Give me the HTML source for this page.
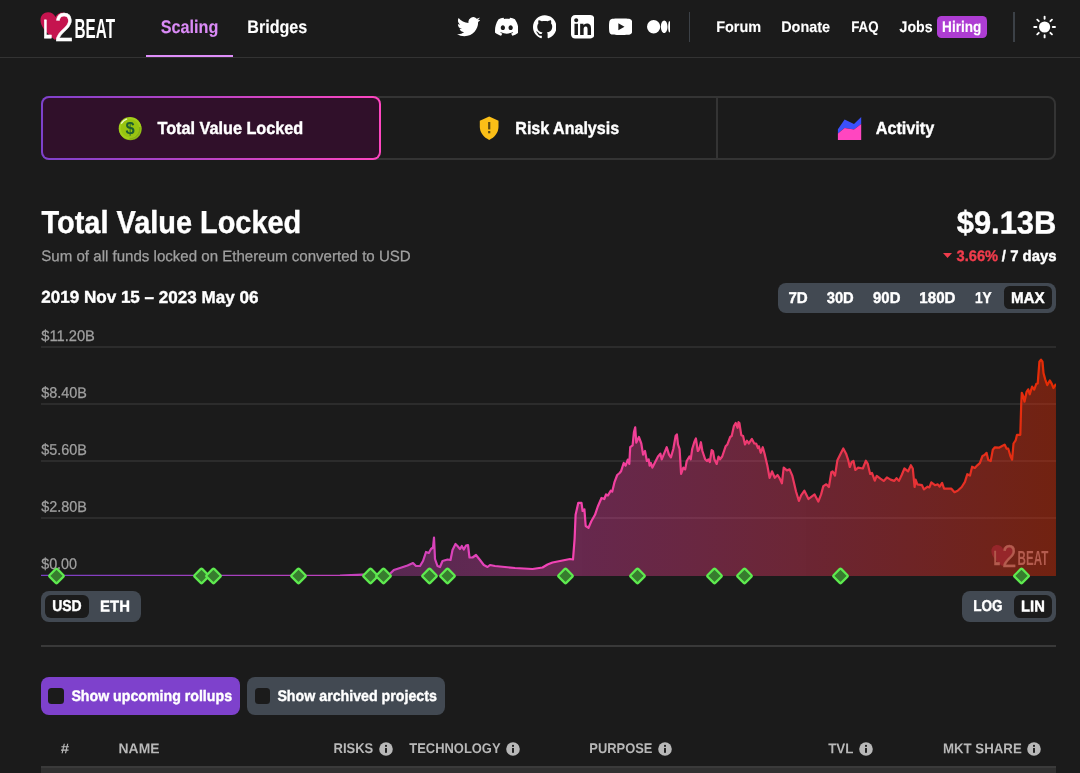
<!DOCTYPE html>
<html lang="en">
<head>
<meta charset="utf-8">
<title>L2BEAT – The state of the layer two ecosystem</title>
<style>
html,body{margin:0;padding:0;background:#1b1b1b;}
body{width:1080px;height:773px;overflow:hidden;position:relative;font-family:"Liberation Sans",Arial,sans-serif;color:#fff;}
.abs{position:absolute;}
.t{position:absolute;white-space:nowrap;line-height:1;transform-origin:0 0;}
.b{font-weight:bold;-webkit-text-stroke:0.4px currentColor;}
.g{color:#a0a0a0;-webkit-text-stroke:0.25px currentColor;}
.m{font-weight:bold;-webkit-text-stroke:0.12px currentColor;}
.th{font-weight:bold;color:#b8b8b8;}
</style>
</head>
<body>
<div id="root" style="position:absolute;left:0;top:0;width:1080px;height:773px;will-change:transform">
<!-- header -->
<div class="abs" style="left:0;top:57px;width:1080px;height:1px;background:#333333"></div>
<div class="abs" style="left:145.7px;top:54.7px;width:87.4px;height:2.5px;background:#de8ef9"></div>
<svg class="abs" style="left:30px;top:5px" width="100" height="50" viewBox="30 5 100 50" font-family="Liberation Sans, Arial, sans-serif"><path d="M55 40C45 32 40.5 26 40.5 20C40.5 15.3 44 12.3 48 12.3C51.5 12.3 54 14 55.5 17C57 14 59.5 12.5 62.5 12.5C66.5 12.5 69.5 15.5 69.5 20C69.5 26 64 32 55 40Z" fill="#c5144f"/>
<text x="43.6" y="37.9" font-size="26.5" font-weight="bold" fill="#fff" stroke="#fff" stroke-width="0.9" stroke-linejoin="round" textLength="8.2" lengthAdjust="spacingAndGlyphs">L</text>
<text x="54.4" y="41.2" font-size="41.5" fill="#fff" stroke="#fff" stroke-width="0.35" stroke-linejoin="round" textLength="19" lengthAdjust="spacingAndGlyphs">2</text>
<text x="74.6" y="38.3" font-size="27" font-weight="bold" fill="#fff" textLength="40.4" lengthAdjust="spacingAndGlyphs">BEAT</text></svg>
<span class="t m" id="nav1" style="left:0;top:0;font-size:18.17px;color:#db8bf7;transform:translate(160.74px,17.88px) rotate(0.03deg) scaleX(0.8911)">Scaling</span>
<span class="t m" id="nav2" style="left:0;top:0;font-size:18.17px;transform:translate(247.29px,17.90px) rotate(0.03deg) scaleX(0.8877)">Bridges</span>
<svg class="abs" style="left:456.6px;top:15.2px" width="23.5" height="23.5" viewBox="0 0 24 24"><path fill="#fff" d="M23.953 4.57a10 10 0 01-2.825.775 4.958 4.958 0 002.163-2.723c-.951.555-2.005.959-3.127 1.184a4.92 4.92 0 00-8.384 4.482C7.69 8.095 4.067 6.13 1.64 3.162a4.822 4.822 0 00-.666 2.475c0 1.71.87 3.213 2.188 4.096a4.904 4.904 0 01-2.228-.616v.06a4.923 4.923 0 003.946 4.827 4.996 4.996 0 01-2.212.085 4.936 4.936 0 004.604 3.417 9.867 9.867 0 01-6.102 2.105c-.39 0-.779-.023-1.17-.067a13.995 13.995 0 007.557 2.209c9.053 0 13.998-7.496 13.998-13.985 0-.21 0-.42-.015-.63A9.935 9.935 0 0024 4.59z"/></svg>
<svg class="abs" style="left:494.6px;top:15.2px" width="23.5" height="23.5" viewBox="0 0 24 24"><path fill="#fff" d="M20.317 4.3698a19.7913 19.7913 0 00-4.8851-1.5152.0741.0741 0 00-.0785.0371c-.211.3753-.4447.8648-.6083 1.2495-1.8447-.2762-3.68-.2762-5.4868 0-.1636-.3933-.4058-.8742-.6177-1.2495a.077.077 0 00-.0785-.037 19.7363 19.7363 0 00-4.8852 1.515.0699.0699 0 00-.0321.0277C.5334 9.0458-.319 13.5799.0992 18.0578a.0824.0824 0 00.0312.0561c2.0528 1.5076 4.0413 2.4228 5.9929 3.0294a.0777.0777 0 00.0842-.0276c.4616-.6304.8731-1.2952 1.226-1.9942a.076.076 0 00-.0416-.1057c-.6528-.2476-1.2743-.5495-1.8722-.8923a.077.077 0 01-.0076-.1277c.1258-.0943.2517-.1923.3718-.2914a.0743.0743 0 01.0776-.0105c3.9278 1.7933 8.18 1.7933 12.0614 0a.0739.0739 0 01.0785.0095c.1202.099.246.1981.3728.2924a.077.077 0 01-.0066.1276 12.2986 12.2986 0 01-1.873.8914.0766.0766 0 00-.0407.1067c.3604.698.7719 1.3628 1.225 1.9932a.076.076 0 00.0842.0286c1.961-.6067 3.9495-1.5219 6.0023-3.0294a.077.077 0 00.0313-.0552c.5004-5.177-.8382-9.6739-3.5485-13.6604a.061.061 0 00-.0312-.0286zM8.02 15.3312c-1.1825 0-2.1569-1.0857-2.1569-2.419 0-1.3332.9555-2.4189 2.157-2.4189 1.2108 0 2.1757 1.0952 2.1568 2.419 0 1.3332-.9555 2.4189-2.1569 2.4189zm7.9748 0c-1.1825 0-2.1569-1.0857-2.1569-2.419 0-1.3332.9554-2.4189 2.1569-2.4189 1.2108 0 2.1757 1.0952 2.1568 2.419 0 1.3332-.946 2.4189-2.1568 2.4189Z"/></svg>
<svg class="abs" style="left:532.6px;top:15.2px" width="23.5" height="23.5" viewBox="0 0 24 24"><path fill="#fff" d="M12 .297c-6.63 0-12 5.373-12 12 0 5.303 3.438 9.8 8.205 11.385.6.113.82-.258.82-.577 0-.285-.01-1.04-.015-2.04-3.338.724-4.042-1.61-4.042-1.61C4.422 18.07 3.633 17.7 3.633 17.7c-1.087-.744.084-.729.084-.729 1.205.084 1.838 1.236 1.838 1.236 1.07 1.835 2.809 1.305 3.495.998.108-.776.417-1.305.76-1.605-2.665-.3-5.466-1.332-5.466-5.93 0-1.31.465-2.38 1.235-3.22-.135-.303-.54-1.523.105-3.176 0 0 1.005-.322 3.3 1.23.96-.267 1.98-.399 3-.405 1.02.006 2.04.138 3 .405 2.28-1.552 3.285-1.23 3.285-1.23.645 1.653.24 2.873.12 3.176.765.84 1.23 1.91 1.23 3.22 0 4.61-2.805 5.625-5.475 5.92.42.36.81 1.096.81 2.22 0 1.606-.015 2.896-.015 3.286 0 .315.21.69.825.57C20.565 22.092 24 17.592 24 12.297c0-6.627-5.373-12-12-12"/></svg>
<svg class="abs" style="left:570.6px;top:15.2px" width="23.5" height="23.5" viewBox="0 0 24 24"><path fill="#fff" d="M20.447 20.452h-3.554v-5.569c0-1.328-.027-3.037-1.852-3.037-1.853 0-2.136 1.445-2.136 2.939v5.667H9.351V9h3.414v1.561h.046c.477-.9 1.637-1.85 3.37-1.85 3.601 0 4.267 2.37 4.267 5.455v6.286zM5.337 7.433c-1.144 0-2.063-.926-2.063-2.065 0-1.138.92-2.063 2.063-2.063 1.14 0 2.064.925 2.064 2.063 0 1.139-.925 2.065-2.064 2.065zm1.782 13.019H3.555V9h3.564v11.452zM19.800 0H4.200C1.880 0 0 1.880 0 4.200v15.600C0 22.120 1.880 24 4.200 24h15.600c2.320 0 4.200-1.880 4.200-4.200V4.200C24 1.880 22.120 0 19.800 0z"/></svg>
<svg class="abs" style="left:608.6px;top:15.2px" width="23.5" height="23.5" viewBox="0 0 24 24"><path fill="#fff" d="M23.498 6.186a3.016 3.016 0 0 0-2.122-2.136C19.505 3.545 12 3.545 12 3.545s-7.505 0-9.377.505A3.017 3.017 0 0 0 .502 6.186C0 8.07 0 12 0 12s0 3.930.502 5.814a3.016 3.016 0 0 0 2.122 2.136c1.871.505 9.376.505 9.376.505s7.505 0 9.377-.505a3.015 3.015 0 0 0 2.122-2.136C24 15.930 24 12 24 12s0-3.930-.502-5.814zM9.545 15.568V8.432L15.818 12l-6.273 3.568z"/></svg>
<svg class="abs" style="left:646.6px;top:15.2px" width="23.5" height="23.5" viewBox="0 0 24 24"><path fill="#fff" d="M13.54 12a6.8 6.8 0 01-6.77 6.82A6.8 6.8 0 010 12a6.8 6.8 0 016.77-6.82A6.8 6.8 0 0113.54 12zM20.960 12c0 3.540-1.510 6.420-3.380 6.420-1.870 0-3.390-2.880-3.390-6.420s1.520-6.420 3.390-6.420 3.380 2.880 3.380 6.420M24 12c0 3.170-.53 5.750-1.190 5.750-.66 0-1.190-2.580-1.190-5.750s.53-5.750 1.190-5.750C23.470 6.250 24 8.830 24 12z"/></svg>

<div class="abs" style="left:688.8px;top:12px;width:1.4px;height:30px;background:#3c4147"></div>
<span class="t m" id="l1" style="left:0;top:0;font-size:15.41px;transform:translate(716.19px,18.96px) rotate(0.03deg) scaleX(0.9389)">Forum</span>
<span class="t m" id="l2" style="left:0;top:0;font-size:15.41px;transform:translate(781.15px,18.96px) rotate(0.03deg) scaleX(0.9370)">Donate</span>
<span class="t m" id="l3" style="left:0;top:0;font-size:15.41px;transform:translate(851.17px,18.96px) rotate(0.03deg) scaleX(0.8637)">FAQ</span>
<span class="t m" id="l4" style="left:0;top:0;font-size:15.41px;transform:translate(899.60px,18.96px) rotate(0.03deg) scaleX(0.9177)">Jobs</span>
<div class="abs" style="left:936.5px;top:15.6px;width:50.4px;height:22.8px;border-radius:4.5px;background:#ae3dd3"></div>
<span class="t m" id="l5" style="left:0;top:0;font-size:15.41px;transform:translate(942.13px,18.96px) rotate(0.03deg) scaleX(0.8814)">Hiring</span>
<div class="abs" style="left:1013.2px;top:12px;width:1.4px;height:30px;background:#3c4147"></div>
<svg class="abs" style="left:1032px;top:15px" width="24" height="24" viewBox="-12 -12 24 24"><circle r="5.6" cx="0.6" cy="0" fill="#fff"/><g transform="translate(0.6 0)" stroke="#fff" stroke-width="1.9" stroke-linecap="round"><path d="M0 -8.2V-10.4M0 8.200V10.4M-8.200 0H-10.400M8.200 0H10.400M5.800 5.800L7.350 7.350M-5.800 5.800L-7.350 7.350M5.800 -5.800L7.350 -7.350M-5.800 -5.800L-7.350 -7.350"/></g></svg>


<!-- tabs -->
<div class="abs" style="left:41px;top:96px;width:1011px;height:60px;border:2px solid #343434;border-radius:8px"></div>
<div class="abs" style="left:716px;top:98px;width:2px;height:60px;background:#343434"></div>
<div class="abs" style="left:41px;top:96px;width:340px;height:64px;border-radius:8px;background:linear-gradient(90deg,#7E41CC,#FF46C0)"></div>
<div class="abs" style="left:43px;top:98px;width:336px;height:60px;border-radius:6px;background:#30102a"></div>
<svg class="abs" style="left:118px;top:116px" width="24" height="25" viewBox="118 116 24 25"><circle cx="130.400" cy="129" r="11.300" fill="#7fa814"/><circle cx="130" cy="128.300" r="11.300" fill="#a3cf1a"/><circle cx="130" cy="128.300" r="9.200" fill="#97c511"/><path d="M121.600 123.200A9.600 9.600 0 0 1 126.600 119.200" fill="none" stroke="#eef7c8" stroke-width="1.300" stroke-linecap="round"/><path d="M139.800 127A10.300 10.300 0 0 1 129.500 138.800" fill="none" stroke="#86b016" stroke-width="1.600"/><text x="130" y="134.300" text-anchor="middle" font-family="Liberation Sans, Arial, sans-serif" font-weight="bold" font-size="16.500" fill="#1d5e30">$</text></svg>
<svg class="abs" style="left:478px;top:115px" width="22" height="27" viewBox="478 115 22 27"><path d="M489.200 116.600L498.500 120.700V126.800C498.500 132.500 494.600 137.600 489.200 139.900C483.800 137.600 479.800 132.500 479.800 126.800V120.700Z" fill="#fbbf17"/><rect x="488.100" y="122" width="2.200" height="7.400" fill="#5d4a12"/><rect x="488.100" y="131" width="2.200" height="2.300" fill="#5d4a12"/></svg>
<svg class="abs" style="left:836px;top:115px" width="27" height="27" viewBox="836 115 27 27"><path d="M837.900 129.200L844.600 119.400L854 124L861.200 116.900V124L854 129.600L844.600 127.900L837.900 133.400Z" fill="#3b50fb"/><path d="M837.900 133.400L844.600 127.900L854 129.600L861.200 124V139.900H837.900Z" fill="#ff46c0"/></svg>

<span class="t b" id="tab1" style="left:0;top:0;font-size:17.44px;transform:translate(157.51px,119.55px) rotate(0.03deg) scaleX(0.9304)">Total Value Locked</span>
<span class="t b" id="tab2" style="left:0;top:0;font-size:17.44px;transform:translate(515.30px,119.55px) rotate(0.03deg) scaleX(0.9206)">Risk Analysis</span>
<span class="t b" id="tab3" style="left:0;top:0;font-size:17.44px;transform:translate(875.69px,119.67px) rotate(0.03deg) scaleX(0.9302)">Activity</span>

<!-- heading -->
<span class="t b" id="h1" style="left:0;top:0;font-size:31.83px;transform:translate(41.57px,207.19px) rotate(0.03deg) scaleX(0.9081)">Total Value Locked</span>
<span class="t g" id="sub" style="left:0;top:0;font-size:15.26px;transform:translate(41.33px,248.12px) rotate(0.03deg) scaleX(0.9881)">Sum of all funds locked on Ethereum converted to USD</span>
<span class="t b" id="tvl" style="left:0;top:0;font-size:31.83px;transform:translate(956.70px,207.37px) rotate(0.03deg) scaleX(0.9711)">$9.13B</span>
<svg class="abs" style="left:943px;top:253px" width="9" height="6" viewBox="0 0 9 6"><path d="M0 0H9L4.5 5Z" fill="#f03c4c"/></svg>
<span class="t b" id="pct" style="left:0;top:0;font-size:15.26px;color:#f03c4c;transform:translate(956.55px,248.11px) rotate(0.03deg) scaleX(0.9601)">3.66%</span>
<span class="t b" id="days" style="left:0;top:0;font-size:15.26px;transform:translate(1001.87px,248.08px) rotate(0.03deg) scaleX(0.9761)">/ 7 days</span>
<span class="t b" id="range" style="left:0;top:0;font-size:17.15px;transform:translate(41.19px,288.82px) rotate(0.03deg) scaleX(0.9957)">2019 Nov 15 – 2023 May 06</span>

<!-- range control -->
<div class="abs" style="left:778px;top:283px;width:278px;height:30px;border-radius:8px;background:#424952"></div>
<div class="abs" style="left:1003.8px;top:286.4px;width:48.7px;height:22.6px;border-radius:5.5px;background:#1b1b1b"></div>
<span class="t b" id="r1" style="left:0;top:0;font-size:15.7px;transform:translate(788.46px,289.90px) rotate(0.03deg) scaleX(0.9641)">7D</span>
<span class="t b" id="r2" style="left:0;top:0;font-size:15.7px;transform:translate(826.69px,289.97px) rotate(0.03deg) scaleX(0.9398)">30D</span>
<span class="t b" id="r3" style="left:0;top:0;font-size:15.7px;transform:translate(873.07px,289.88px) rotate(0.03deg) scaleX(0.9500)">90D</span>
<span class="t b" id="r4" style="left:0;top:0;font-size:15.7px;transform:translate(919.37px,289.97px) rotate(0.03deg) scaleX(0.9634)">180D</span>
<span class="t b" id="r5" style="left:0;top:0;font-size:15.7px;transform:translate(974.90px,289.82px) rotate(0.03deg) scaleX(0.8691)">1Y</span>
<span class="t b" id="r6" style="left:0;top:0;font-size:15.7px;transform:translate(1010.92px,289.91px) rotate(0.03deg) scaleX(0.9692)">MAX</span>

<!-- chart -->
<svg class="abs" style="left:0;top:0" width="1080" height="773" viewBox="0 0 1080 773">
<defs>
<linearGradient id="lg" gradientUnits="userSpaceOnUse" x1="41" y1="0" x2="1056" y2="0"><stop offset="0" stop-color="#7E41CC"/><stop offset="0.5" stop-color="#FF46C0"/><stop offset="1" stop-color="#EE2C01"/></linearGradient>
<linearGradient id="fg" gradientUnits="userSpaceOnUse" x1="41" y1="0" x2="1056" y2="0"><stop offset="0" stop-color="#7E41CC" stop-opacity="0.32"/><stop offset="0.5" stop-color="#FF46C0" stop-opacity="0.33"/><stop offset="1" stop-color="#EE2C01" stop-opacity="0.41"/></linearGradient>
</defs>
<rect x="41" y="346" width="1015" height="2" fill="#2c2c2c"/><rect x="41" y="403" width="1015" height="2" fill="#2c2c2c"/><rect x="41" y="460" width="1015" height="2" fill="#2c2c2c"/><rect x="41" y="517" width="1015" height="2" fill="#2c2c2c"/>
<clipPath id="cc"><rect x="41" y="340" width="1015" height="236.1"/></clipPath>
<g clip-path="url(#cc)"><path d="M41.0 575.8 L150.0 575.8 L250.0 575.8 L340.0 575.6 L362.5 574.7 L390.0 573.8 L393.8 570.0 L400.0 568.0 L407.5 565.5 L413.0 563.0 L416.0 566.0 L420.0 566.0 L423.0 561.0 L426.0 552.0 L428.8 553.0 L431.0 549.0 L433.0 547.5 L434.0 537.5 L435.0 559.0 L437.5 566.0 L440.0 567.0 L442.5 561.0 L447.5 559.5 L450.5 560.0 L452.5 550.0 L455.5 544.0 L457.5 546.0 L460.0 549.0 L461.8 546.0 L463.8 549.5 L466.0 545.5 L468.0 545.0 L469.5 557.5 L472.5 557.5 L476.0 555.0 L480.0 560.0 L483.8 565.0 L487.5 567.0 L490.0 565.0 L495.0 566.0 L505.0 567.0 L515.0 568.0 L532.5 569.0 L542.5 567.5 L547.5 564.5 L552.5 562.5 L560.0 561.0 L570.0 559.0 L573.0 559.5 L574.6 538.9 L575.6 514.8 L578.3 502.8 L581.5 502.8 L582.6 511.0 L584.4 509.3 L585.7 526.0 L588.5 527.8 L591.3 521.3 L595.0 514.8 L597.8 506.5 L601.5 498.0 L604.3 499.0 L606.0 494.4 L608.0 495.4 L610.7 490.7 L612.2 491.7 L614.4 482.4 L617.2 475.0 L619.6 473.0 L621.0 471.3 L623.7 463.0 L625.6 465.7 L627.8 459.6 L629.3 463.9 L630.2 447.2 L632.6 445.4 L633.9 432.4 L635.2 427.4 L636.3 442.6 L638.9 437.0 L641.3 443.5 L643.1 454.6 L645.0 451.0 L646.9 461.0 L648.7 459.3 L649.6 465.7 L650.9 463.0 L652.4 467.6 L655.2 462.0 L658.0 456.5 L660.4 453.7 L661.7 459.3 L664.4 452.8 L666.7 447.2 L669.0 454.6 L670.9 457.4 L673.3 449.0 L675.6 436.0 L676.9 434.3 L678.0 444.4 L679.6 449.0 L681.1 474.0 L683.3 467.6 L685.2 469.4 L686.7 461.0 L689.4 456.5 L690.7 459.3 L692.2 449.0 L694.4 441.7 L695.9 438.5 L697.8 451.0 L699.3 449.0 L700.9 442.2 L702.4 451.0 L705.2 459.3 L707.0 461.0 L708.5 459.3 L709.8 462.0 L711.7 450.0 L713.0 451.0 L714.4 459.3 L716.7 463.9 L718.5 456.5 L720.0 459.3 L722.2 456.5 L725.6 446.3 L727.4 444.4 L730.2 437.0 L731.7 436.0 L733.9 426.0 L735.7 423.0 L737.6 427.8 L738.5 422.2 L739.4 423.0 L741.3 435.2 L743.1 436.0 L745.0 444.4 L746.9 440.7 L748.7 443.5 L751.9 438.9 L754.3 443.5 L756.1 443.5 L758.0 448.0 L758.9 446.3 L760.7 452.8 L762.8 447.2 L764.6 453.7 L767.4 465.7 L769.6 477.8 L772.0 471.3 L774.8 477.8 L777.6 475.0 L779.4 477.8 L781.9 483.3 L783.7 467.6 L786.9 470.4 L789.6 469.4 L792.4 475.9 L796.1 491.7 L798.9 500.9 L801.1 495.4 L804.4 490.7 L808.5 499.0 L811.9 496.3 L814.6 494.4 L818.3 501.5 L821.1 494.4 L823.3 486.1 L826.3 484.3 L828.9 487.0 L831.3 472.2 L832.6 471.3 L835.0 475.6 L837.4 460.2 L840.6 453.7 L843.3 448.5 L846.1 453.7 L848.0 459.3 L849.8 467.0 L851.7 462.0 L853.5 461.0 L855.4 470.0 L858.1 467.6 L862.8 468.5 L865.9 460.7 L867.8 463.9 L870.2 474.0 L872.0 473.0 L874.8 480.6 L876.7 475.9 L880.4 478.7 L883.7 480.9 L886.9 477.4 L890.6 479.6 L894.3 480.9 L896.5 478.1 L898.9 480.9 L901.7 475.0 L904.4 468.5 L908.1 471.3 L910.9 465.2 L912.8 468.5 L914.6 487.0 L915.6 479.6 L917.4 484.3 L922.0 485.2 L923.9 489.4 L927.6 486.7 L929.4 487.4 L931.3 482.4 L935.0 485.2 L937.8 484.3 L939.6 486.7 L942.1 482.9 L944.1 488.7 L951.4 488.7 L954.5 492.2 L957.6 490.8 L961.7 487.0 L964.9 481.9 L967.3 474.2 L970.0 475.6 L972.1 466.7 L974.8 468.0 L977.3 465.3 L979.8 463.2 L982.5 456.0 L984.5 455.0 L986.6 452.9 L988.3 460.1 L990.7 461.1 L992.8 449.8 L994.9 447.3 L999.0 447.7 L1002.1 446.0 L1004.6 444.6 L1006.7 448.7 L1008.3 448.7 L1010.4 456.0 L1012.1 459.7 L1013.5 443.5 L1015.6 440.4 L1017.0 434.8 L1020.3 434.8 L1021.2 404.2 L1021.8 392.8 L1023.2 395.9 L1024.5 401.7 L1026.6 391.8 L1028.2 389.3 L1029.7 394.3 L1032.1 386.6 L1034.2 389.7 L1036.3 383.9 L1037.7 383.5 L1039.4 361.7 L1041.0 359.7 L1042.5 361.7 L1043.5 373.1 L1045.2 379.3 L1047.3 385.1 L1049.8 380.4 L1051.8 383.9 L1053.5 388.0 L1056.0 383.9 L1056 577 L41 577 Z" fill="url(#fg)"/>
<path d="M41.0 575.8 L150.0 575.8 L250.0 575.8 L340.0 575.6 L362.5 574.7 L390.0 573.8 L393.8 570.0 L400.0 568.0 L407.5 565.5 L413.0 563.0 L416.0 566.0 L420.0 566.0 L423.0 561.0 L426.0 552.0 L428.8 553.0 L431.0 549.0 L433.0 547.5 L434.0 537.5 L435.0 559.0 L437.5 566.0 L440.0 567.0 L442.5 561.0 L447.5 559.5 L450.5 560.0 L452.5 550.0 L455.5 544.0 L457.5 546.0 L460.0 549.0 L461.8 546.0 L463.8 549.5 L466.0 545.5 L468.0 545.0 L469.5 557.5 L472.5 557.5 L476.0 555.0 L480.0 560.0 L483.8 565.0 L487.5 567.0 L490.0 565.0 L495.0 566.0 L505.0 567.0 L515.0 568.0 L532.5 569.0 L542.5 567.5 L547.5 564.5 L552.5 562.5 L560.0 561.0 L570.0 559.0 L573.0 559.5 L574.6 538.9 L575.6 514.8 L578.3 502.8 L581.5 502.8 L582.6 511.0 L584.4 509.3 L585.7 526.0 L588.5 527.8 L591.3 521.3 L595.0 514.8 L597.8 506.5 L601.5 498.0 L604.3 499.0 L606.0 494.4 L608.0 495.4 L610.7 490.7 L612.2 491.7 L614.4 482.4 L617.2 475.0 L619.6 473.0 L621.0 471.3 L623.7 463.0 L625.6 465.7 L627.8 459.6 L629.3 463.9 L630.2 447.2 L632.6 445.4 L633.9 432.4 L635.2 427.4 L636.3 442.6 L638.9 437.0 L641.3 443.5 L643.1 454.6 L645.0 451.0 L646.9 461.0 L648.7 459.3 L649.6 465.7 L650.9 463.0 L652.4 467.6 L655.2 462.0 L658.0 456.5 L660.4 453.7 L661.7 459.3 L664.4 452.8 L666.7 447.2 L669.0 454.6 L670.9 457.4 L673.3 449.0 L675.6 436.0 L676.9 434.3 L678.0 444.4 L679.6 449.0 L681.1 474.0 L683.3 467.6 L685.2 469.4 L686.7 461.0 L689.4 456.5 L690.7 459.3 L692.2 449.0 L694.4 441.7 L695.9 438.5 L697.8 451.0 L699.3 449.0 L700.9 442.2 L702.4 451.0 L705.2 459.3 L707.0 461.0 L708.5 459.3 L709.8 462.0 L711.7 450.0 L713.0 451.0 L714.4 459.3 L716.7 463.9 L718.5 456.5 L720.0 459.3 L722.2 456.5 L725.6 446.3 L727.4 444.4 L730.2 437.0 L731.7 436.0 L733.9 426.0 L735.7 423.0 L737.6 427.8 L738.5 422.2 L739.4 423.0 L741.3 435.2 L743.1 436.0 L745.0 444.4 L746.9 440.7 L748.7 443.5 L751.9 438.9 L754.3 443.5 L756.1 443.5 L758.0 448.0 L758.9 446.3 L760.7 452.8 L762.8 447.2 L764.6 453.7 L767.4 465.7 L769.6 477.8 L772.0 471.3 L774.8 477.8 L777.6 475.0 L779.4 477.8 L781.9 483.3 L783.7 467.6 L786.9 470.4 L789.6 469.4 L792.4 475.9 L796.1 491.7 L798.9 500.9 L801.1 495.4 L804.4 490.7 L808.5 499.0 L811.9 496.3 L814.6 494.4 L818.3 501.5 L821.1 494.4 L823.3 486.1 L826.3 484.3 L828.9 487.0 L831.3 472.2 L832.6 471.3 L835.0 475.6 L837.4 460.2 L840.6 453.7 L843.3 448.5 L846.1 453.7 L848.0 459.3 L849.8 467.0 L851.7 462.0 L853.5 461.0 L855.4 470.0 L858.1 467.6 L862.8 468.5 L865.9 460.7 L867.8 463.9 L870.2 474.0 L872.0 473.0 L874.8 480.6 L876.7 475.9 L880.4 478.7 L883.7 480.9 L886.9 477.4 L890.6 479.6 L894.3 480.9 L896.5 478.1 L898.9 480.9 L901.7 475.0 L904.4 468.5 L908.1 471.3 L910.9 465.2 L912.8 468.5 L914.6 487.0 L915.6 479.6 L917.4 484.3 L922.0 485.2 L923.9 489.4 L927.6 486.7 L929.4 487.4 L931.3 482.4 L935.0 485.2 L937.8 484.3 L939.6 486.7 L942.1 482.9 L944.1 488.7 L951.4 488.7 L954.5 492.2 L957.6 490.8 L961.7 487.0 L964.9 481.9 L967.3 474.2 L970.0 475.6 L972.1 466.7 L974.8 468.0 L977.3 465.3 L979.8 463.2 L982.5 456.0 L984.5 455.0 L986.6 452.9 L988.3 460.1 L990.7 461.1 L992.8 449.8 L994.9 447.3 L999.0 447.7 L1002.1 446.0 L1004.6 444.6 L1006.7 448.7 L1008.3 448.7 L1010.4 456.0 L1012.1 459.7 L1013.5 443.5 L1015.6 440.4 L1017.0 434.8 L1020.3 434.8 L1021.2 404.2 L1021.8 392.8 L1023.2 395.9 L1024.5 401.7 L1026.6 391.8 L1028.2 389.3 L1029.7 394.3 L1032.1 386.6 L1034.2 389.7 L1036.3 383.9 L1037.7 383.5 L1039.4 361.7 L1041.0 359.7 L1042.5 361.7 L1043.5 373.1 L1045.2 379.3 L1047.3 385.1 L1049.8 380.4 L1051.8 383.9 L1053.5 388.0 L1056.0 383.9" fill="none" stroke="url(#lg)" stroke-width="2.2" stroke-opacity="0.94" stroke-linejoin="round"/></g>
<g transform="translate(960.4 535.7) scale(0.765)" font-family="Liberation Sans, Arial, sans-serif"><path d="M55 40C45 32 40.5 26 40.5 20C40.5 15.3 44 12.3 48 12.3C51.5 12.3 54 14 55.5 17C57 14 59.5 12.5 62.5 12.5C66.5 12.5 69.5 15.5 69.5 20C69.5 26 64 32 55 40Z" fill="#96262a"/>
<text x="43.6" y="37.9" font-size="26.5" font-weight="bold" fill="#b45c4f" stroke="#b45c4f" stroke-width="0.9" stroke-linejoin="round" textLength="8.2" lengthAdjust="spacingAndGlyphs">L</text>
<text x="54.4" y="41.2" font-size="41.5" fill="#b45c4f" stroke="#b45c4f" stroke-width="0.35" stroke-linejoin="round" textLength="19" lengthAdjust="spacingAndGlyphs">2</text>
<text x="74.6" y="38.3" font-size="27" font-weight="bold" fill="#b45c4f" textLength="40.4" lengthAdjust="spacingAndGlyphs">BEAT</text></g>
<rect x="51.05" y="570.4499999999999" width="10.9" height="10.9" rx="1" transform="rotate(45 56.5 575.9)" fill="#377d2e" stroke="#5eea4f" stroke-width="2.2" stroke-linejoin="round"/><rect x="196.05" y="570.4499999999999" width="10.9" height="10.9" rx="1" transform="rotate(45 201.5 575.9)" fill="#377d2e" stroke="#5eea4f" stroke-width="2.2" stroke-linejoin="round"/><rect x="208.05" y="570.4499999999999" width="10.9" height="10.9" rx="1" transform="rotate(45 213.5 575.9)" fill="#377d2e" stroke="#5eea4f" stroke-width="2.2" stroke-linejoin="round"/><rect x="293.05" y="570.4499999999999" width="10.9" height="10.9" rx="1" transform="rotate(45 298.5 575.9)" fill="#377d2e" stroke="#5eea4f" stroke-width="2.2" stroke-linejoin="round"/><rect x="365.05" y="570.4499999999999" width="10.9" height="10.9" rx="1" transform="rotate(45 370.5 575.9)" fill="#377d2e" stroke="#5eea4f" stroke-width="2.2" stroke-linejoin="round"/><rect x="378.05" y="570.4499999999999" width="10.9" height="10.9" rx="1" transform="rotate(45 383.5 575.9)" fill="#377d2e" stroke="#5eea4f" stroke-width="2.2" stroke-linejoin="round"/><rect x="424.05" y="570.4499999999999" width="10.9" height="10.9" rx="1" transform="rotate(45 429.5 575.9)" fill="#377d2e" stroke="#5eea4f" stroke-width="2.2" stroke-linejoin="round"/><rect x="442.05" y="570.4499999999999" width="10.9" height="10.9" rx="1" transform="rotate(45 447.5 575.9)" fill="#377d2e" stroke="#5eea4f" stroke-width="2.2" stroke-linejoin="round"/><rect x="560.05" y="570.4499999999999" width="10.9" height="10.9" rx="1" transform="rotate(45 565.5 575.9)" fill="#377d2e" stroke="#5eea4f" stroke-width="2.2" stroke-linejoin="round"/><rect x="632.05" y="570.4499999999999" width="10.9" height="10.9" rx="1" transform="rotate(45 637.5 575.9)" fill="#377d2e" stroke="#5eea4f" stroke-width="2.2" stroke-linejoin="round"/><rect x="709.05" y="570.4499999999999" width="10.9" height="10.9" rx="1" transform="rotate(45 714.5 575.9)" fill="#377d2e" stroke="#5eea4f" stroke-width="2.2" stroke-linejoin="round"/><rect x="739.05" y="570.4499999999999" width="10.9" height="10.9" rx="1" transform="rotate(45 744.5 575.9)" fill="#377d2e" stroke="#5eea4f" stroke-width="2.2" stroke-linejoin="round"/><rect x="835.05" y="570.4499999999999" width="10.9" height="10.9" rx="1" transform="rotate(45 840.5 575.9)" fill="#377d2e" stroke="#5eea4f" stroke-width="2.2" stroke-linejoin="round"/><rect x="1016.05" y="570.4499999999999" width="10.9" height="10.9" rx="1" transform="rotate(45 1021.5 575.9)" fill="#377d2e" stroke="#5eea4f" stroke-width="2.2" stroke-linejoin="round"/>
</svg>
<span class="t g" id="y1" style="left:0;top:0;font-size:15.41px;transform:translate(41.27px,327.92px) rotate(0.03deg) scaleX(0.9539)">$11.20B</span>
<span class="t g" id="y2" style="left:0;top:0;font-size:15.41px;transform:translate(41.20px,384.86px) rotate(0.03deg) scaleX(0.9345)">$8.40B</span>
<span class="t g" id="y3" style="left:0;top:0;font-size:15.41px;transform:translate(41.20px,441.86px) rotate(0.03deg) scaleX(0.9345)">$5.60B</span>
<span class="t g" id="y4" style="left:0;top:0;font-size:15.41px;transform:translate(41.20px,498.86px) rotate(0.03deg) scaleX(0.9345)">$2.80B</span>
<span class="t g" id="y5" style="left:0;top:0;font-size:15.41px;transform:translate(41.18px,555.74px) rotate(0.03deg) scaleX(0.9296)">$0.00</span>

<!-- currency / scale controls -->
<div class="abs" style="left:41px;top:591px;width:100px;height:31px;border-radius:8px;background:#424952"></div>
<div class="abs" style="left:45px;top:595px;width:44px;height:23px;border-radius:6px;background:#1b1b1b"></div>
<span class="t b" id="c1" style="left:0;top:0;font-size:15.7px;transform:translate(52.14px,598.41px) rotate(0.03deg) scaleX(0.8914)">USD</span>
<span class="t b" id="c2" style="left:0;top:0;font-size:15.7px;transform:translate(100.13px,598.38px) rotate(0.03deg) scaleX(0.9489)">ETH</span>
<div class="abs" style="left:962px;top:591px;width:94px;height:31px;border-radius:8px;background:#424952"></div>
<div class="abs" style="left:1014px;top:595px;width:38px;height:23px;border-radius:6px;background:#1b1b1b"></div>
<span class="t b" id="c3" style="left:0;top:0;font-size:15.7px;transform:translate(973.18px,598.42px) rotate(0.03deg) scaleX(0.8651)">LOG</span>
<span class="t b" id="c4" style="left:0;top:0;font-size:15.7px;transform:translate(1021.08px,598.40px) rotate(0.03deg) scaleX(0.9405)">LIN</span>

<div class="abs" style="left:41px;top:644.7px;width:1015px;height:2px;background:#393939"></div>

<!-- filters -->
<div class="abs" style="left:41px;top:677px;width:199px;height:38px;border-radius:8px;background:#7e41cc"></div>
<div class="abs" style="left:48.4px;top:688.4px;width:15.2px;height:15.2px;border-radius:3.5px;background:#1b1b1b"></div>
<span class="t b" id="f1" style="left:0;top:0;font-size:15.26px;transform:translate(71.39px,688.28px) rotate(0.03deg) scaleX(0.9294)">Show upcoming rollups</span>
<div class="abs" style="left:247px;top:677px;width:198px;height:38px;border-radius:8px;background:#424952"></div>
<div class="abs" style="left:254.6px;top:688.4px;width:15.2px;height:15.2px;border-radius:3.5px;background:#1b1b1b"></div>
<span class="t b" id="f2" style="left:0;top:0;font-size:15.26px;transform:translate(277.40px,688.28px) rotate(0.03deg) scaleX(0.9317)">Show archived projects</span>

<!-- table head -->
<span class="t th" id="th0" style="left:0;top:0;font-size:14.1px;transform:translate(60.80px,741.20px) rotate(0.03deg) scaleX(1.0680)">#</span>
<span class="t th" id="th1" style="left:0;top:0;font-size:14.1px;transform:translate(118.60px,741.15px) rotate(0.03deg) scaleX(0.9841)">NAME</span>
<span class="t th" id="th2" style="left:0;top:0;font-size:14.1px;transform:translate(333.50px,741.48px) rotate(0.03deg) scaleX(0.9230)">RISKS</span>
<span class="t th" id="th3" style="left:0;top:0;font-size:14.1px;transform:translate(409.30px,741.32px) rotate(0.03deg) scaleX(0.9174)">TECHNOLOGY</span>
<span class="t th" id="th4" style="left:0;top:0;font-size:14.1px;transform:translate(589.31px,741.47px) rotate(0.03deg) scaleX(0.9165)">PURPOSE</span>
<span class="t th" id="th5" style="left:0;top:0;font-size:14.1px;transform:translate(828.20px,741.21px) rotate(0.03deg) scaleX(0.9483)">TVL</span>
<span class="t th" id="th6" style="left:0;top:0;font-size:14.1px;transform:translate(942.94px,741.18px) rotate(0.03deg) scaleX(0.9413)">MKT SHARE</span>
<svg class="abs" style="left:377.7px;top:740.6px" width="16" height="16" viewBox="0 0 16 16"><circle cx="8" cy="8" r="6.8" fill="#b8b8b8"/><rect x="7.05" y="7" width="1.9" height="4.8" fill="#1b1b1b"/><rect x="7.05" y="3.9" width="1.9" height="1.9" fill="#1b1b1b"/></svg>
<svg class="abs" style="left:504.7px;top:740.6px" width="16" height="16" viewBox="0 0 16 16"><circle cx="8" cy="8" r="6.8" fill="#b8b8b8"/><rect x="7.05" y="7" width="1.9" height="4.8" fill="#1b1b1b"/><rect x="7.05" y="3.9" width="1.9" height="1.9" fill="#1b1b1b"/></svg>
<svg class="abs" style="left:657.2px;top:740.6px" width="16" height="16" viewBox="0 0 16 16"><circle cx="8" cy="8" r="6.8" fill="#b8b8b8"/><rect x="7.05" y="7" width="1.9" height="4.8" fill="#1b1b1b"/><rect x="7.05" y="3.9" width="1.9" height="1.9" fill="#1b1b1b"/></svg>
<svg class="abs" style="left:858.1px;top:740.6px" width="16" height="16" viewBox="0 0 16 16"><circle cx="8" cy="8" r="6.8" fill="#b8b8b8"/><rect x="7.05" y="7" width="1.9" height="4.8" fill="#1b1b1b"/><rect x="7.05" y="3.9" width="1.9" height="1.9" fill="#1b1b1b"/></svg>
<svg class="abs" style="left:1026.4px;top:740.6px" width="16" height="16" viewBox="0 0 16 16"><circle cx="8" cy="8" r="6.8" fill="#b8b8b8"/><rect x="7.05" y="7" width="1.9" height="4.8" fill="#1b1b1b"/><rect x="7.05" y="3.9" width="1.9" height="1.9" fill="#1b1b1b"/></svg>

<div class="abs" style="left:41px;top:765.8px;width:1015px;height:8px;background:#303030"></div>
<div class="abs" style="left:41px;top:765.8px;width:1015px;height:2.3px;background:#3a3a3a"></div>
</div>
</body>
</html>
